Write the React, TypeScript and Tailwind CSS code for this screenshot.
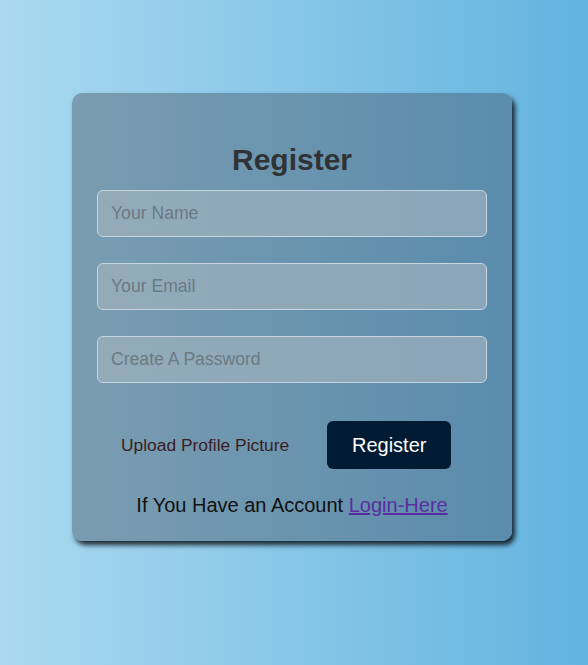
import React from "react";

export default function App() {
  return (
    <div
      className="w-full min-h-[665px] bg-gradient-to-r from-[#aad9f0] to-[#62b3df] flex justify-center pr-[4px] pt-[93px]"
      style={{ fontFamily: '"Liberation Sans", Arial, sans-serif' }}
    >
      <div className="w-[440px] h-[448px] self-start rounded-[10px] bg-gradient-to-r from-[#7a9cb1] to-[#5a8cac] shadow-[3px_4px_5px_rgba(0,0,0,0.8)] flex flex-col items-center pt-[50px] pb-[24px]">
        <h1 className="text-[30px] leading-[34px] font-bold text-[#303335] mb-[13px]">
          Register
        </h1>
        <div className="flex flex-col gap-[26px]">
          {["Your Name", "Your Email", "Create A Password"].map((p) => (
            <input
              key={p}
              type={p.includes("Password") ? "password" : "text"}
              placeholder={p}
              className="w-[390px] h-[47px] rounded-[6px] border border-[#c6d5df] bg-gradient-to-r from-[#93abb9] to-[#8aa6b8] px-[13px] text-[17.6px] text-[#333] placeholder:text-[#6a7a84] outline-none"
              style={{ fontFamily: '"Liberation Sans", Arial, sans-serif' }}
            />
          ))}
        </div>
        <div className="w-[390px] mt-[38px] flex items-center">
          <span className="ml-[24px] text-[17.4px] text-[#3a1d22]">
            Upload Profile Picture
          </span>
          <button
            className="ml-[38px] w-[124px] h-[48px] rounded-[6px] bg-[#021b34] text-white text-[20px]"
            style={{ fontFamily: '"Liberation Sans", Arial, sans-serif' }}
          >
            Register
          </button>
        </div>
        <p className="mt-[25px] text-[20px] leading-[23px] text-[#111]">
          If You Have an Account{" "}
          <a href="#" className="text-[#5a2ea0] underline">
            Login-Here
          </a>
        </p>
      </div>
    </div>
  );
}
